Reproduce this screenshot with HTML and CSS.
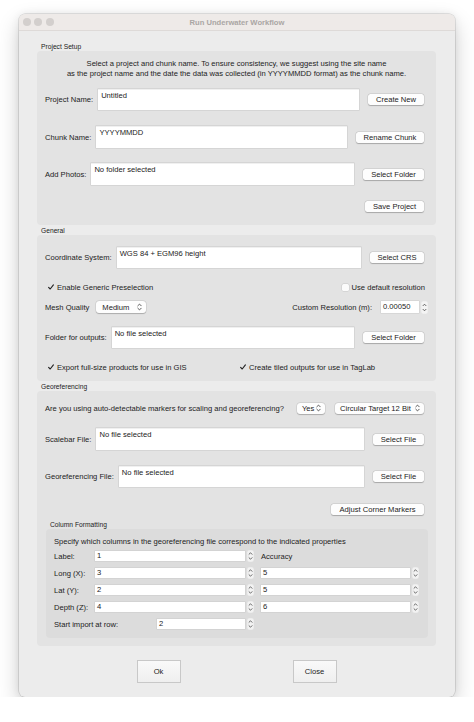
FILE: index.html
```html
<!DOCTYPE html>
<html>
<head>
<meta charset="utf-8">
<title>Run Underwater Workflow</title>
<link rel="stylesheet" href="styles.css">
</head>
<body>
<div class="window">
  <div class="titlebar">
    <div class="lights"><span class="light"></span><span class="light"></span><span class="light"></span></div>
    <div class="title">Run Underwater Workflow</div>
    <div></div>
  </div>
  <div class="content">
    <div class="group-label">Project Setup</div>
    <div class="group g-project">
      <p class="intro">Select a project and chunk name. To ensure consistency, we suggest using the site name<br>as the project name and the date the data was collected (in YYYYMMDD format) as the chunk name.</p>
      <div class="row field-row fr-project">
        <span class="label">Project Name:</span>
        <div class="field">Untitled</div>
        <button class="btn w-create">Create New</button>
      </div>
      <div class="row field-row fr-chunk">
        <span class="label">Chunk Name:</span>
        <div class="field">YYYYMMDD</div>
        <button class="btn w-rename">Rename Chunk</button>
      </div>
      <div class="row field-row fr-photos">
        <span class="label">Add Photos:</span>
        <div class="field">No folder selected</div>
        <button class="btn w-folder">Select Folder</button>
      </div>
      <div class="row btn-row fr-save">
        <button class="btn w-save">Save Project</button>
      </div>
    </div>

    <div class="group-label">General</div>
    <div class="group g-general">
      <div class="row field-row fr-crs">
        <span class="label">Coordinate System:</span>
        <div class="field">WGS 84 + EGM96 height</div>
        <button class="btn w-crs">Select CRS</button>
      </div>
      <div class="row check-row fr-checks1">
        <span class="check on"><svg width="6" height="6" viewBox="0 0 6 6"><path d="M0.6 3.3 L2.2 5 L5.4 0.9" fill="none" stroke="#222" stroke-width="1.1" stroke-linecap="round" stroke-linejoin="round"/></svg>Enable Generic Preselection</span>
        <span class="check off"><span class="box"></span>Use default resolution</span>
      </div>
      <div class="row mesh-row">
        <span class="label">Mesh Quality</span>
        <div class="combo w-medium"><span>Medium</span><svg class="chev" width="5" height="8" viewBox="0 0 5 8"><path d="M0.8 2.8 L2.5 1.1 L4.2 2.8 M0.8 5.2 L2.5 6.9 L4.2 5.2" fill="none" stroke="#333" stroke-width="0.8" stroke-linecap="round" stroke-linejoin="round"/></svg></div>
        <span class="spacer"></span>
        <span class="label">Custom Resolution (m):</span>
        <div class="spin-field">0.00050</div>
        <svg class="arrows" width="7" height="13" viewBox="0 0 7 13"><rect x="0.3" y="0.3" width="6.4" height="12.4" rx="2" fill="#f4f4f4"/><path d="M2 4.7 L3.5 3.2 L5 4.7 M2 8.3 L3.5 9.8 L5 8.3" fill="none" stroke="#444" stroke-width="0.8" stroke-linecap="round" stroke-linejoin="round"/></svg>
      </div>
      <div class="row field-row fr-outputs">
        <span class="label">Folder for outputs:</span>
        <div class="field">No file selected</div>
        <button class="btn w-folder">Select Folder</button>
      </div>
      <div class="row check-row two-col fr-checks2">
        <span class="check on"><svg width="6" height="6" viewBox="0 0 6 6"><path d="M0.6 3.3 L2.2 5 L5.4 0.9" fill="none" stroke="#222" stroke-width="1.1" stroke-linecap="round" stroke-linejoin="round"/></svg>Export full-size products for use in GIS</span>
        <span class="check on"><svg width="6" height="6" viewBox="0 0 6 6"><path d="M0.6 3.3 L2.2 5 L5.4 0.9" fill="none" stroke="#222" stroke-width="1.1" stroke-linecap="round" stroke-linejoin="round"/></svg>Create tiled outputs for use in TagLab</span>
      </div>
    </div>

    <div class="group-label">Georeferencing</div>
    <div class="group g-geo">
      <div class="row question-row">
        <span class="label">Are you using auto-detectable markers for scaling and georeferencing?</span>
        <div class="combos">
          <div class="combo w-yes"><span>Yes</span><svg class="chev" width="5" height="8" viewBox="0 0 5 8"><path d="M0.8 2.8 L2.5 1.1 L4.2 2.8 M0.8 5.2 L2.5 6.9 L4.2 5.2" fill="none" stroke="#333" stroke-width="0.8" stroke-linecap="round" stroke-linejoin="round"/></svg></div>
          <div class="combo w-target"><span>Circular Target 12 Bit</span><svg class="chev" width="5" height="8" viewBox="0 0 5 8"><path d="M0.8 2.8 L2.5 1.1 L4.2 2.8 M0.8 5.2 L2.5 6.9 L4.2 5.2" fill="none" stroke="#333" stroke-width="0.8" stroke-linecap="round" stroke-linejoin="round"/></svg></div>
        </div>
      </div>
      <div class="row field-row fr-scalebar">
        <span class="label">Scalebar File:</span>
        <div class="field">No file selected</div>
        <button class="btn w-file">Select File</button>
      </div>
      <div class="row field-row fr-georef">
        <span class="label">Georeferencing File:</span>
        <div class="field">No file selected</div>
        <button class="btn w-file">Select File</button>
      </div>
      <div class="row btn-row fr-adjust">
        <button class="btn w-adjust">Adjust Corner Markers</button>
      </div>

      <div class="group-label sub">Column Formatting</div>
      <div class="group inner">
        <p class="desc">Specify which columns in the georeferencing file correspond to the indicated properties</p>
        <div class="cf-grid">
          <span class="label">Label:</span>
          <div class="num">1</div>
          <svg class="arrows sm" width="7" height="12" viewBox="0 0 7 12"><rect x="0.3" y="0.3" width="6.4" height="11.4" rx="2" fill="#f2f2f2"/><path d="M2 4.3 L3.5 2.8 L5 4.3 M2 7.7 L3.5 9.2 L5 7.7" fill="none" stroke="#444" stroke-width="0.8" stroke-linecap="round" stroke-linejoin="round"/></svg>
          <span class="label acc">Accuracy</span>
          <span></span>

          <span class="label">Long (X):</span>
          <div class="num">3</div>
          <svg class="arrows sm" width="7" height="12" viewBox="0 0 7 12"><rect x="0.3" y="0.3" width="6.4" height="11.4" rx="2" fill="#f2f2f2"/><path d="M2 4.3 L3.5 2.8 L5 4.3 M2 7.7 L3.5 9.2 L5 7.7" fill="none" stroke="#444" stroke-width="0.8" stroke-linecap="round" stroke-linejoin="round"/></svg>
          <div class="num">5</div>
          <svg class="arrows sm" width="7" height="12" viewBox="0 0 7 12"><rect x="0.3" y="0.3" width="6.4" height="11.4" rx="2" fill="#f2f2f2"/><path d="M2 4.3 L3.5 2.8 L5 4.3 M2 7.7 L3.5 9.2 L5 7.7" fill="none" stroke="#444" stroke-width="0.8" stroke-linecap="round" stroke-linejoin="round"/></svg>

          <span class="label">Lat (Y):</span>
          <div class="num">2</div>
          <svg class="arrows sm" width="7" height="12" viewBox="0 0 7 12"><rect x="0.3" y="0.3" width="6.4" height="11.4" rx="2" fill="#f2f2f2"/><path d="M2 4.3 L3.5 2.8 L5 4.3 M2 7.7 L3.5 9.2 L5 7.7" fill="none" stroke="#444" stroke-width="0.8" stroke-linecap="round" stroke-linejoin="round"/></svg>
          <div class="num">5</div>
          <svg class="arrows sm" width="7" height="12" viewBox="0 0 7 12"><rect x="0.3" y="0.3" width="6.4" height="11.4" rx="2" fill="#f2f2f2"/><path d="M2 4.3 L3.5 2.8 L5 4.3 M2 7.7 L3.5 9.2 L5 7.7" fill="none" stroke="#444" stroke-width="0.8" stroke-linecap="round" stroke-linejoin="round"/></svg>

          <span class="label">Depth (Z):</span>
          <div class="num">4</div>
          <svg class="arrows sm" width="7" height="12" viewBox="0 0 7 12"><rect x="0.3" y="0.3" width="6.4" height="11.4" rx="2" fill="#f2f2f2"/><path d="M2 4.3 L3.5 2.8 L5 4.3 M2 7.7 L3.5 9.2 L5 7.7" fill="none" stroke="#444" stroke-width="0.8" stroke-linecap="round" stroke-linejoin="round"/></svg>
          <div class="num">6</div>
          <svg class="arrows sm" width="7" height="12" viewBox="0 0 7 12"><rect x="0.3" y="0.3" width="6.4" height="11.4" rx="2" fill="#f2f2f2"/><path d="M2 4.3 L3.5 2.8 L5 4.3 M2 7.7 L3.5 9.2 L5 7.7" fill="none" stroke="#444" stroke-width="0.8" stroke-linecap="round" stroke-linejoin="round"/></svg>

          <div class="start-row">
            <span class="label start-label">Start import at row:</span>
            <div class="num start-num">2</div>
            <svg class="arrows sm" width="7" height="12" viewBox="0 0 7 12"><rect x="0.3" y="0.3" width="6.4" height="11.4" rx="2" fill="#f2f2f2"/><path d="M2 4.3 L3.5 2.8 L5 4.3 M2 7.7 L3.5 9.2 L5 7.7" fill="none" stroke="#444" stroke-width="0.8" stroke-linecap="round" stroke-linejoin="round"/></svg>
          </div>
        </div>
      </div>
    </div>

    <div class="dlg-btns">
      <button class="dlg-btn">Ok</button>
      <button class="dlg-btn">Close</button>
    </div>
  </div>
</div>
</body>
</html>
```

FILE: styles.css
```css
* { box-sizing: border-box; }
html, body { margin: 0; padding: 0; background: #ffffff; }
body {
  font-family: "Liberation Sans", Arial, sans-serif;
  font-size: 7.6px;
  color: #222222;
}

.window {
  margin: 14px 0 0 19px;
  width: 436px;
  background: #ececec;
  border-radius: 6px;
  overflow: hidden;
  box-shadow: 0 0 0 0.5px rgba(0,0,0,0.18), 0 9px 22px rgba(0,0,0,0.2), 0 0 8px rgba(0,0,0,0.07);
  padding-bottom: 14px;
}

.titlebar {
  height: 17px;
  background: #eeeae8;
  border-bottom: 1px solid #dedad8;
  display: grid;
  grid-template-columns: 1fr auto 1fr;
  align-items: center;
}
.lights { display: flex; gap: 3.5px; padding-left: 3.5px; }
.light { width: 8px; height: 8px; border-radius: 50%; background: #d3cfcd; }
.title { font-weight: bold; font-size: 7.6px; color: #aaa6a4; }

.content { padding: 11px 19px 0 18px; }

.group-label {
  font-size: 6.7px;
  line-height: 9px;
  height: 9px;
  padding-left: 4px;
}
.group + .group-label { margin-top: 1px; }

.group {
  background: #e3e3e3;
  border-radius: 4px;
  padding: 0 12px 0 8px;
}
.g-project { padding-top: 8px; padding-bottom: 13px; }
.g-general { padding-top: 12px; padding-bottom: 8px; }
.g-geo { padding-top: 11px; padding-bottom: 8px; }

.intro {
  margin: 0 -4px 0 0;
  text-align: center;
  line-height: 10px;
}

.row { display: flex; align-items: center; }
.label { white-space: nowrap; }

.field-row { height: 22px; }
.fr-project { height: 21px; margin-top: 10px; }
.fr-chunk { margin-top: 16px; }
.fr-photos { margin-top: 15px; }
.fr-save { margin-top: 15px; }
.fr-crs { height: 21px; }
.fr-checks1 { margin-top: 13px; }
.fr-outputs { height: 21px; margin-top: 13px; }
.fr-checks2 { margin-top: 13px; }
.fr-scalebar { margin-top: 14px; }
.fr-georef { height: 21px; margin-top: 16px; }
.fr-adjust { margin-top: 16px; }

.field {
  flex: 1;
  align-self: stretch;
  margin-left: 5px;
  background: #ffffff;
  padding: 2px 3px;
  line-height: 10px;
  box-shadow: 0 0 0 0.5px rgba(0,0,0,0.12), inset 0 0.5px 0 rgba(0,0,0,0.12);
}

.btn {
  margin-left: 9px;
  height: 11px;
  padding: 0;
  border: none;
  border-radius: 2.5px;
  background: #fdfdfd;
  font-family: inherit;
  font-size: 7.6px;
  line-height: 11px;
  color: #222;
  text-align: center;
  box-shadow: 0 0 0 0.5px rgba(0,0,0,0.1), 0 0.6px 1px rgba(0,0,0,0.22);
  white-space: nowrap;
}
.btn-row { height: 12px; justify-content: flex-end; }
.w-create { width: 56px; }
.w-rename { width: 68px; }
.w-folder { width: 61px; }
.w-save { width: 59px; }
.w-crs { width: 54px; }
.w-file { width: 51px; }
.w-adjust { width: 93px; }

.check-row { height: 12px; justify-content: space-between; }
.check { display: flex; align-items: center; white-space: nowrap; }
.check.on { padding-left: 3px; }
.check.on svg { margin-right: 3px; }
.check .box {
  width: 7px; height: 7px;
  background: #fbfbfb;
  border-radius: 1.5px;
  box-shadow: 0 0 0 0.5px rgba(0,0,0,0.12);
  margin-right: 3px;
}
.check.off { margin-right: -1px; }
.two-col { justify-content: flex-start; }
.two-col .check:first-child { width: 192px; }

.mesh-row { height: 14px; margin-top: 7px; margin-right: -4px; }
.spacer { flex: 1; }
.combo {
  height: 12px;
  background: #fdfdfd;
  border-radius: 3px;
  box-shadow: 0 0 0 0.5px rgba(0,0,0,0.1), 0 0.6px 1px rgba(0,0,0,0.2);
  display: flex;
  align-items: center;
  justify-content: space-between;
  white-space: nowrap;
}
.w-medium { width: 50px; margin-left: 7px; padding: 0 4px 0 6px; }
.spin-field {
  width: 38px;
  height: 12px;
  margin-left: 9px;
  background: #ffffff;
  line-height: 12px;
  padding-left: 2px;
  box-shadow: 0 0 0 0.5px rgba(0,0,0,0.1);
}
.arrows { margin-left: 2px; display: block; }

.question-row { height: 12px; }
.combos { margin-left: auto; display: flex; gap: 10px; }
.w-yes { width: 28px; height: 11px; padding: 0 4px 0 5px; }
.w-target { width: 89px; height: 11px; padding: 0 4px 0 5px; }

.group-label.sub { margin-top: 5px; padding-left: 5px; }
.group.inner {
  background: #dcdcdc;
  margin: 0 -4px 0 1px;
  padding: 8px 2px 8px 8px;
}
.desc { margin: 0; line-height: 10px; }
.cf-grid {
  margin-top: 3px;
  display: grid;
  grid-template-columns: 41px 150px 16px 149px 16px;
  grid-auto-rows: 12px;
  row-gap: 5px;
  align-items: center;
}
.num {
  height: 10px;
  background: #ffffff;
  line-height: 10px;
  padding-left: 2px;
  box-shadow: 0 0 0 0.5px rgba(0,0,0,0.08);
}
.acc { padding-left: 0; }
.start-row { grid-column: 1 / -1; display: flex; align-items: center; }
.start-label { width: 103px; }
.start-num { width: 88px; }

.dlg-btns {
  display: flex;
  justify-content: center;
  gap: 112px;
  margin-top: 14px;
}
.dlg-btn {
  width: 44px;
  height: 23px;
  padding: 0;
  border: 1px solid #c8c8c8;
  background: linear-gradient(#f9f9f9, #efefef);
  font-family: inherit;
  font-size: 7.6px;
  color: #222;
}
```
